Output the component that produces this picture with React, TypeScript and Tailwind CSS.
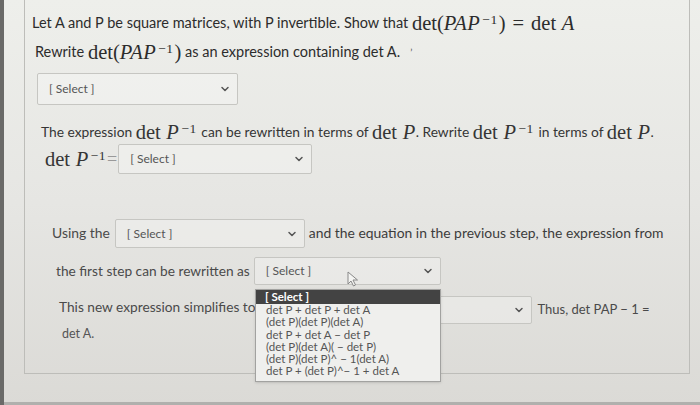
import React from 'react';
import { ChevronDown } from 'lucide-react';

const serif = "font-['Liberation_Serif',serif]";

// small KaTeX-like pieces
const Det = () => <span className={`${serif} text-[20.5px]`}>det</span>;
const It = ({ children }: { children: React.ReactNode }) => (
  <span className={`${serif} italic text-[20.5px] tracking-[0.5px]`}>{children}</span>
);
const Inv = () => (
  <sup className={`${serif} text-[13.5px] relative -top-[3px] ml-[2px] mr-[1px] tracking-[0.5px]`}>−1</sup>
);

const Select = ({ className, label = true }: { className: string; label?: boolean }) => (
  <div
    className={`flex items-center justify-between border border-[#c6c6c2] bg-white/25 rounded-[2px] pl-[11px] pr-[6px] ${className}`}
  >
    <span className="text-[12px] text-[#555]">{label ? '[ Select ]' : ''}</span>
    <ChevronDown size={12} strokeWidth={3} className="text-[#555]" />
  </div>
);

const options = [
  'det P + det P + det A',
  '(det P)(det P)(det A)',
  'det P + det A − det P',
  '(det P)(det A)( − det P)',
  '(det P)(det P)^ − 1(det A)',
  'det P + (det P)^− 1 + det A',
];

export default function App() {
  return (
    <div className="relative w-[700px] h-[405px] overflow-hidden border-l-[4px] border-[#6a6a68] bg-linear-to-b from-[#eeefeb] via-[#e6e6e3] to-[#dbdad6] font-['Lato',sans-serif] text-[#2c2c2c]">
      <div className="ml-[20px] mr-[10px] h-[374px] border-l border-r border-b border-[#bdbdb9] pt-[13px] relative">
        {/* line 1 */}
        <div className="ml-[7px] h-[20px] flex items-center text-[14.5px] whitespace-nowrap">
          <span>Let A and P be square matrices, with P invertible. Show that&nbsp;</span>
          <Det />
          <span className={`${serif} text-[20.5px]`}>(</span>
          <It>PAP</It>
          <Inv />
          <span className={`${serif} text-[20.5px]`}>)</span>
          <span className={`${serif} text-[20.5px] mx-[7px]`}>=</span>
          <Det />
          <It>&nbsp;A</It>
        </div>
        {/* line 2 */}
        <div className="ml-[10px] mt-[9px] h-[20px] flex items-center text-[14.5px] whitespace-nowrap">
          <span>Rewrite&nbsp;</span>
          <Det />
          <span className={`${serif} text-[20.5px]`}>(</span>
          <It>PAP</It>
          <Inv />
          <span className={`${serif} text-[20.5px]`}>)</span>
          <span>&nbsp;as an expression containing det A.</span>
          <span className="ml-[10px] text-[#555] text-[10px]">’</span>
        </div>
        <Select className="ml-[12px] mt-[11px] w-[201px] h-[32px]" />

        {/* panel 2 */}
        <div className="ml-[16px] mt-[17px] h-[20px] flex items-center text-[13.8px] whitespace-nowrap text-[#353535]">
          <span>The expression&nbsp;</span>
          <Det />
          <It>&nbsp;P</It>
          <Inv />
          <span>&nbsp;can be rewritten in terms of&nbsp;</span>
          <Det />
          <It>&nbsp;P</It>
          <span>. Rewrite&nbsp;</span>
          <Det />
          <It>&nbsp;P</It>
          <Inv />
          <span>&nbsp;in terms of&nbsp;</span>
          <Det />
          <It>&nbsp;P</It>
          <span>.</span>
        </div>
        <div className="ml-[20px] mt-[2px] h-[30px] flex items-center whitespace-nowrap text-[#353535]">
          <Det />
          <It>&nbsp;P</It>
          <Inv />
          <span className={`${serif} text-[18px] text-[#999]`}>=</span>
          <Select className="ml-[1px] w-[194px] h-[30px]" />
        </div>

        {/* panel 3 */}
        <div className="ml-[27px] mt-[45px] h-[29px] flex items-center whitespace-nowrap text-[13.9px] text-[#4a4a4a]">
          <span>Using the</span>
          <Select className="ml-[5px] w-[190px] h-[29px]" />
          <span className="ml-[4px] text-[#3c3c3c]">and the equation in the previous step, the expression from</span>
        </div>
        <div className="ml-[31px] mt-[9px] h-[28px] flex items-center whitespace-nowrap text-[13.7px] text-[#4a4a4a]">
          <span>the first step can be rewritten as</span>
          <Select className="ml-[4px] w-[187px] h-[28px]" />
        </div>
        <div className="ml-[34px] mt-[11px] h-[28px] flex items-center whitespace-nowrap text-[13.7px] text-[#4a4a4a]">
          <span className="-mt-[6px]">This new expression simplifies to</span>
          <Select label={false} className="ml-[2px] w-[275px] h-[28px]" />
          <span className="ml-[5px] text-[13px]">Thus, det PAP − 1 =</span>
        </div>
        <div className="ml-[37px] mt-[0px] h-[20px] flex items-center text-[12.5px] text-[#555]">det A.</div>

        {/* mouse cursor */}
        <svg className="absolute left-[322px] top-[271px]" width="12" height="16" viewBox="0 0 12 16">
          <path d="M1 1 L1 13 L4 10 L6.5 15 L8.5 14 L6 9 L10.5 9 Z" fill="#f4f4f2" stroke="#888" strokeWidth="1" />
        </svg>

        {/* open dropdown */}
        <div className="absolute left-[230px] top-[289px] w-[186px] h-[93px] border border-[#a2a2a0] bg-[#efefed] shadow-sm">
          <div className="h-[14px] bg-[#434343] pl-[9px] flex items-center">
            <span className="text-[11.5px] font-bold text-white leading-none">[ Select ]</span>
          </div>
          <div className="pl-[10px] flex flex-col text-[11.5px] leading-[12.3px] text-[#555]">
            {options.map((o) => (
              <span key={o} className="whitespace-nowrap">
                {o}
              </span>
            ))}
          </div>
        </div>
      </div>
      <div className="absolute left-0 right-0 bottom-0 h-[3px] bg-[#b0b0ad]" />
    </div>
  );
}
